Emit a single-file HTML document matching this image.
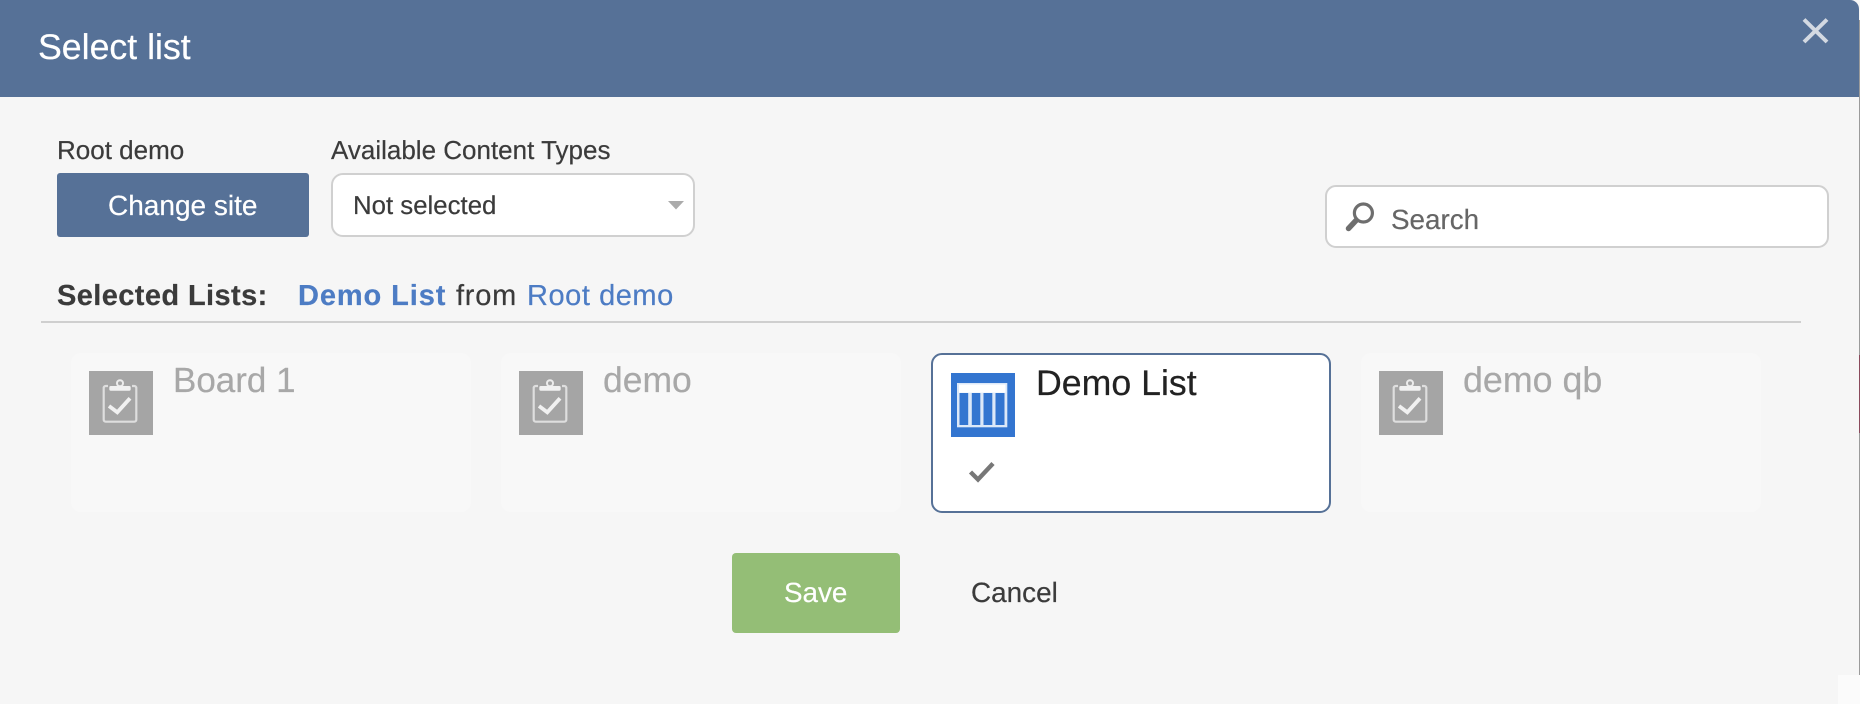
<!DOCTYPE html>
<html lang="en">
<head>
<meta charset="utf-8">
<title>Select list</title>
<style>
html,body{margin:0;padding:0;width:1860px;height:704px;overflow:hidden;background:#f6f6f6}
body{position:relative;font-family:"Liberation Sans",Arial,sans-serif;text-rendering:geometricPrecision}
.a{position:absolute;box-sizing:border-box}
.t{position:absolute;line-height:0;white-space:nowrap;-webkit-text-stroke:.2px currentColor}
.card{position:absolute;box-sizing:border-box;top:353px;width:400px;height:159px;background:#f8f8f8;border-radius:10px}
.ico{position:absolute;width:64px;height:64px;display:block}
</style>
</head>
<body>
<div class="a" style="left:0;top:0;width:1859px;height:97px;background:#567197;border-top-right-radius:9px"></div>
<div class="a" style="left:1859px;top:20px;width:1px;height:655px;background:#9b9b9b"></div>
<div class="a" style="left:1859px;top:355px;width:1px;height:78px;background:#8a4a5c"></div>
<div class="a" style="left:1838px;top:675px;width:22px;height:29px;background:#fbfbfb"></div>
<div class="t" style="left:38px;top:46.6px;font-size:35.7px;color:#fff">Select list</div>
<svg class="a" style="left:1800px;top:16px" width="30" height="29" viewBox="0 0 30 29"><path d="M4 3.5 L27 26 M27 3.5 L4 26" stroke="#d3d9e2" stroke-width="4" fill="none"/></svg>

<div class="t" style="left:57px;top:150.200px;font-size:26px;color:#3b3b3b">Root demo</div>
<div class="t" style="left:331px;top:150.200px;font-size:26px;color:#3b3b3b">Available Content Types</div>

<div class="a" style="left:57px;top:173px;width:252px;height:64px;background:#567197;border-radius:3px"></div>
<div class="t" style="left:108px;top:205.800px;font-size:28px;color:#fff">Change site</div>

<div class="a" style="left:331px;top:173px;width:363.5px;height:64px;background:#fff;border:2px solid #d0d0d0;border-radius:12px"></div>
<div class="t" style="left:353px;top:205.500px;font-size:25.8px;color:#3b3b3b">Not selected</div>
<svg class="a" style="left:667px;top:200px" width="18" height="10" viewBox="0 0 18 10"><path d="M1 1 H17 L9 9.500 Z" fill="#ababab"/></svg>

<div class="a" style="left:1325px;top:185px;width:504px;height:63px;background:#fff;border:2px solid #d0d0d0;border-radius:11px"></div>
<svg class="a" style="left:1340px;top:195px" width="45" height="45" viewBox="0 0 45 45"><circle cx="23.400" cy="18" r="9" fill="none" stroke="#6e6e6e" stroke-width="3.200"/><path d="M16 25.500 L8.500 33.500" stroke="#6e6e6e" stroke-width="5.500" stroke-linecap="round"/></svg>
<div class="t" style="left:1391px;top:219.6px;font-size:27.8px;color:#666">Search</div>

<div class="t" style="left:57px;top:296px;font-size:29px;font-weight:700;letter-spacing:.4px;color:#3b3b3b">Selected Lists:</div>
<div class="t" style="left:298px;top:296px;font-size:29px;font-weight:700;letter-spacing:.9px;color:#4d7cc4">Demo List</div>
<div class="t" style="left:456px;top:296px;font-size:29px;letter-spacing:.75px;color:#3b3b3b">from</div>
<div class="t" style="left:527px;top:296px;font-size:29px;letter-spacing:.55px;color:#4d7cc4">Root demo</div>
<div class="a" style="left:41px;top:321px;width:1760px;height:2px;background:#cfcfcf"></div>

<div class="card" style="left:71px"></div>
<svg class="ico" style="left:89px;top:371px" viewBox="0 0 64 64"><rect width="64" height="64" fill="#a5a5a5"/><path d="M19 15H16.700a2 2 0 0 0-2 2V48.700a2 2 0 0 0 2 2H45.300a2 2 0 0 0 2-2V17a2 2 0 0 0-2-2H43" fill="none" stroke="#dedede" stroke-width="2.200"/><circle cx="31" cy="12.200" r="3" fill="none" stroke="#ececec" stroke-width="2"/><rect x="20.300" y="15" width="21.400" height="4.700" rx="1.500" fill="#f1f1f1"/><path d="M20 35 L28.300 41.300 L41 27.300" fill="none" stroke="#f1f1f1" stroke-width="3.800"/></svg>
<div class="t" style="left:173px;top:380.900px;font-size:35px;color:#a8a8a8">Board 1</div>

<div class="card" style="left:501px"></div>
<svg class="ico" style="left:519px;top:371px" viewBox="0 0 64 64"><rect width="64" height="64" fill="#a5a5a5"/><path d="M19 15H16.700a2 2 0 0 0-2 2V48.700a2 2 0 0 0 2 2H45.300a2 2 0 0 0 2-2V17a2 2 0 0 0-2-2H43" fill="none" stroke="#dedede" stroke-width="2.200"/><circle cx="31" cy="12.200" r="3" fill="none" stroke="#ececec" stroke-width="2"/><rect x="20.300" y="15" width="21.400" height="4.700" rx="1.500" fill="#f1f1f1"/><path d="M20 35 L28.300 41.300 L41 27.300" fill="none" stroke="#f1f1f1" stroke-width="3.800"/></svg>
<div class="t" style="left:603px;top:380.300px;font-size:35.500px;color:#a8a8a8">demo</div>

<div class="a" style="left:931px;top:353px;width:400px;height:160px;background:#fff;border:2px solid #567197;border-radius:11px"></div>
<svg class="ico" style="left:951px;top:373px" viewBox="0 0 64 64"><rect width="64" height="64" fill="#3375d0"/><rect x="6" y="10" width="50.300" height="44.300" fill="#dce8f8"/><rect x="8" y="11.500" width="46.500" height="8.200" fill="#fff"/><rect x="8.500" y="20" width="8.700" height="32" fill="#3375d0"/><rect x="20.800" y="20" width="8.500" height="32" fill="#3375d0"/><rect x="32.500" y="20" width="8.800" height="32" fill="#3375d0"/><rect x="44.500" y="20" width="9" height="32" fill="#3375d0"/></svg>
<div class="t" style="left:1036px;top:382.700px;font-size:35.700px;color:#222">Demo List</div>
<svg class="a" style="left:967px;top:460px" width="30" height="25" viewBox="0 0 30 25"><path d="M3.500 12 L11 19.500 L26 3.500" fill="none" stroke="#777" stroke-width="4.400"/></svg>

<div class="card" style="left:1361px"></div>
<svg class="ico" style="left:1379px;top:371px" viewBox="0 0 64 64"><rect width="64" height="64" fill="#a5a5a5"/><path d="M19 15H16.700a2 2 0 0 0-2 2V48.700a2 2 0 0 0 2 2H45.300a2 2 0 0 0 2-2V17a2 2 0 0 0-2-2H43" fill="none" stroke="#dedede" stroke-width="2.200"/><circle cx="31" cy="12.200" r="3" fill="none" stroke="#ececec" stroke-width="2"/><rect x="20.300" y="15" width="21.400" height="4.700" rx="1.500" fill="#f1f1f1"/><path d="M20 35 L28.300 41.300 L41 27.300" fill="none" stroke="#f1f1f1" stroke-width="3.800"/></svg>
<div class="t" style="left:1463px;top:380.300px;font-size:35.800px;color:#a8a8a8">demo qb</div>

<div class="a" style="left:732px;top:553px;width:168px;height:80px;background:#94be76;border-radius:4px"></div>
<div class="t" style="left:784px;top:593.400px;font-size:27.800px;color:#fff">Save</div>
<div class="t" style="left:971px;top:593.400px;font-size:27.900px;color:#3b3b3b">Cancel</div>
</body>
</html>
